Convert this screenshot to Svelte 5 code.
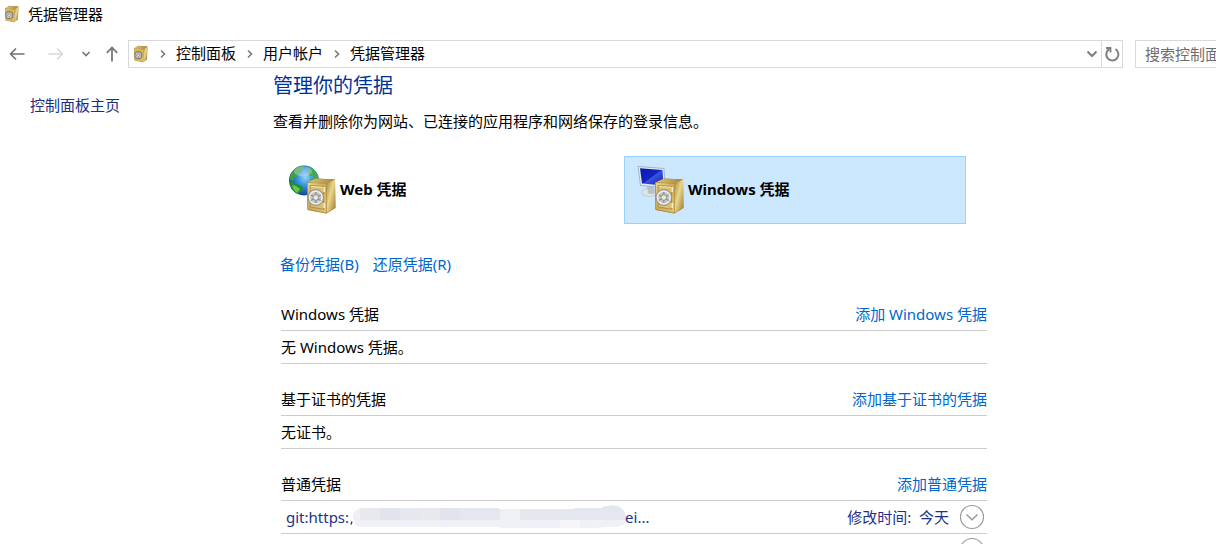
<script>
  const crumbs = ['控制面板', '用户帐户', '凭据管理器'];
  const sections = [
    { title: 'Windows 凭据', action: '添加 Windows 凭据', empty: '无 Windows 凭据。' },
    { title: '基于证书的凭据', action: '添加基于证书的凭据', empty: '无证书。' },
    { title: '普通凭据', action: '添加普通凭据', empty: '' }
  ];
  let selected = $state('windows');
</script>

{#snippet safeShape()}
  <path d="M19 18 L28 13.500 L47 14.500 L47.500 43 L38.500 48.500 L19.500 45Z" fill="#94742c" />
  <path d="M19.500 17.500 L28 13.500 L47 14.500 L38.500 18.500Z" fill="url(#goldTop)" />
  <path d="M38.500 18.500 L47 14.500 L47.300 42.500 L38.500 48Z" fill="url(#goldSide)" />
  <path d="M19.500 17.500 L38.500 18.500 L38.500 48 L20 44.500Z" fill="url(#goldFront)" stroke="#b08f42" stroke-width=".6" />
  <path d="M22 20.500 L35.500 21.300 L35.500 44.300 L22.300 42Z" fill="#d8bf74" stroke="#a3853c" stroke-width=".8" />
  <path d="M23 21.500 L35 22.300" stroke="#fff3b8" stroke-width=".8" />
  <path d="M36.200 22v5M36.200 38v5" stroke="#f3ecc8" stroke-width="1.800" />
  <circle cx="27.800" cy="32.500" r="7.900" fill="#c6c5c0" stroke="#94928c" stroke-width="1" />
  <circle cx="27.800" cy="32.500" r="6.300" fill="none" stroke="#efefed" stroke-width="1.300" />
  <path d="M27.800 27v11M22.800 30l10 5.500M32.800 30l-10 5.500" stroke="#84827c" stroke-width="1" />
  <circle cx="27.800" cy="32.500" r="2.800" fill="#e8e8e6" stroke="#85857f" stroke-width=".8" />
{/snippet}

{#snippet smallSafe()}
  <svg class="small-safe" viewBox="0 0 16 18" aria-hidden="true">
    <path d="M1 3.500 L5 .8 L14.500 1.500 L14 14.500 L10 17.300 L1.500 15.500Z" fill="#b08a38" />
    <path d="M1.300 3.500 L5 1 L14.300 1.600 L10.500 4.500Z" fill="url(#goldTop)" />
    <path d="M10.500 4.500 L14.300 1.800 L13.800 14.300 L10.200 17Z" fill="url(#goldSide)" />
    <path d="M1.300 3.800 L10.500 4.600 L10.200 17 L1.800 15.200Z" fill="#d9b75c" />
    <circle cx="5.300" cy="10.200" r="3.500" fill="#c9c6bb" stroke="#85827a" stroke-width="1.200" />
    <path d="M5.300 8v4.500M3.200 10.200h4.300" stroke="#8b887e" />
    <circle cx="5.300" cy="10.200" r="1" fill="#dedede" />
  </svg>
{/snippet}

{#snippet chevron()}
  <svg width="8" height="10" viewBox="0 0 8 10" aria-hidden="true">
    <path d="M2 1.500 5.500 5 2 8.500" fill="none" stroke="#7a7a7a" stroke-width="1.600" />
  </svg>
{/snippet}

{#snippet expander()}
  <button class="expand" aria-label="展开">
    <svg width="26" height="26" viewBox="0 0 26 26" aria-hidden="true">
      <circle cx="13" cy="13" r="11.500" fill="#fff" stroke="#999" stroke-width="1.200" />
      <path d="M7.500 10.500 13 15.800l5.500-5.300" fill="none" stroke="#999" stroke-width="1.500" />
    </svg>
  </button>
{/snippet}

<svg class="defs" aria-hidden="true">
  <defs>
    <linearGradient id="goldFront" x1="0" y1="0" x2="1" y2="1">
      <stop offset="0" stop-color="#f0dc98" /><stop offset=".5" stop-color="#cdaa54" /><stop offset="1" stop-color="#e3c671" />
    </linearGradient>
    <linearGradient id="goldSide" x1="0" y1="0" x2="1" y2="1">
      <stop offset="0" stop-color="#a88638" /><stop offset=".45" stop-color="#e9d68e" /><stop offset="1" stop-color="#9b7a2c" />
    </linearGradient>
    <linearGradient id="goldTop" x1="0" y1="0" x2="1" y2="0">
      <stop offset="0" stop-color="#e0c678" /><stop offset="1" stop-color="#a48640" />
    </linearGradient>
    <radialGradient id="sea" cx=".55" cy=".4" r=".62">
      <stop offset="0" stop-color="#8fd4f6" /><stop offset=".45" stop-color="#3292de" /><stop offset="1" stop-color="#163f92" />
    </radialGradient>
    <linearGradient id="screen" x1="0" y1="0" x2="1" y2="1">
      <stop offset="0" stop-color="#0a18a8" /><stop offset=".5" stop-color="#1424c4" /><stop offset=".52" stop-color="#3c55e0" /><stop offset="1" stop-color="#0c1ba8" />
    </linearGradient>
    <clipPath id="globe"><circle cx="16" cy="15.500" r="14.500" /></clipPath>
  </defs>
</svg>

<div class="window">
  <header class="title">{@render smallSafe()}<span>凭据管理器</span></header>

  <nav class="bar" aria-label="导航">
    <button class="back" aria-label="后退">
      <svg width="16" height="14" viewBox="0 0 16 14"><path d="M15.500 7H1.500M7 1.500 1.500 7 7 12.500" fill="none" stroke="#707070" stroke-width="1.600" /></svg>
    </button>
    <button class="forward" aria-label="前进">
      <svg width="16" height="14" viewBox="0 0 16 14"><path d="M.5 7h14M9 1.500 14.500 7 9 12.500" fill="none" stroke="#d8d8d8" stroke-width="1.600" /></svg>
    </button>
    <button class="recent" aria-label="最近浏览的位置">
      <svg width="10" height="8" viewBox="0 0 10 8"><path d="M1.500 2 5 5.500 8.500 2" fill="none" stroke="#777" stroke-width="1.700" /></svg>
    </button>
    <button class="up" aria-label="上移">
      <svg width="14" height="16" viewBox="0 0 14 16"><path d="M7 15.500V1.500M1.800 6.800 7 1.500l5.200 5.300" fill="none" stroke="#787878" stroke-width="1.800" /></svg>
    </button>
    <div class="address">
      {@render smallSafe()}
      {#each crumbs as crumb}
        <span class="sep">{@render chevron()}</span><a class="crumb" href="#top">{crumb}</a>
      {/each}
      <button class="drop" aria-label="历史记录">
        <svg width="12" height="8" viewBox="0 0 12 8"><path d="M1.500 1.500 6 6l4.500-4.500" fill="none" stroke="#808080" stroke-width="2" /></svg>
      </button>
      <button class="refresh" aria-label="刷新">
        <svg width="16" height="16" viewBox="0 0 16 16"><path d="M11.500 3.200A6.100 6.100 0 1 1 5.500 3" fill="none" stroke="#808080" stroke-width="2" /><path d="M2 2h4.500v4.500" fill="none" stroke="#808080" stroke-width="1.800" /></svg>
      </button>
    </div>
    <input class="search" type="text" aria-label="搜索控制面板" placeholder="搜索控制面板" />
  </nav>

  <div class="body">
    <aside><a class="home" href="#home">控制面板主页</a></aside>
    <main>
      <h1>管理你的凭据</h1>
      <p class="intro">查看并删除你为网站、已连接的应用程序和网络保存的登录信息。</p>

      <div class="vaults">
        <button class="vault" class:selected={selected === 'web'} onclick={() => (selected = 'web')}>
          <svg width="48" height="50" viewBox="0 0 48 50" aria-hidden="true">
            <circle cx="16" cy="15.500" r="15" fill="url(#sea)" />
            <g clip-path="url(#globe)">
              <path d="M2 12 3 6l6-4 6-2 1 2-3 3 1 2-4 2-1 3-3 1-1 3-3-1z" fill="#3f9f4a" />
              <path d="M19 1c6 0 10 5 12 10l-2 5-3-2-1-4-3 1-2-3 2-2z" fill="#45a94a" />
              <path d="M0 15l4 2 4 2 6 2 1 4-4 3-1 4C4 28 0 22 0 15z" fill="#258f33" />
              <path d="M4 20l4 1 4 3-3 4c-3-2-4-5-5-8z" fill="#63c94a" />
              <path d="M22 13l5 2 1 3-5 1z" fill="#4bb052" />
            </g>
            <ellipse cx="15" cy="6.500" rx="9" ry="5" fill="#fff" opacity=".3" />
            {@render safeShape()}
          </svg>
          <span>Web 凭据</span>
        </button>
        <button class="vault" class:selected={selected === 'windows'} onclick={() => (selected = 'windows')}>
          <svg width="48" height="50" viewBox="0 0 48 50" aria-hidden="true">
            <ellipse cx="13.500" cy="27.500" rx="8" ry="4" fill="#dde4e8" stroke="#b5c1c9" stroke-width=".7" />
            <path d="M11 21l7 1 1 6c-2 1.500-5 1.500-7 0z" fill="#b6c1c9" />
            <path d="M2 1.500 28 3.500 29 22.500 4.500 20.500Z" fill="#e3edf3" stroke="#93a7b5" stroke-width=".8" />
            <path d="M4 3.200 26.500 5 27.500 20.500 6 18.500Z" fill="url(#screen)" />
            {@render safeShape()}
          </svg>
          <span>Windows 凭据</span>
        </button>
      </div>

      <div class="tools"><a href="#backup">备份凭据(B)</a><a href="#restore">还原凭据(R)</a></div>

      {#each sections as section}
        <section>
          <div class="head"><h2>{section.title}</h2><a href="#add">{section.action}</a></div>
          {#if section.empty}
            <p class="row">{section.empty}</p>
          {:else}
            <div class="row entry">
              <span class="name">git:https:</span>
              <svg class="mask" width="276" height="24" viewBox="0 0 276 24" aria-hidden="true">
                <defs><clipPath id="smudge"><path d="M10 3H147v1h75V3h27c5-3 17-4 21 1 4 4 5 10 3 14-3 4-9 4-17 4l-12 1H150l-6-1H10C4 22 1 18 1 13S4 4 10 3z" /></clipPath></defs>
                <path d="M0 16.500l-1 3" stroke="#1e3287" stroke-width="1.300" />
                <g clip-path="url(#smudge)">
                  <path fill="#e6e8f0" d="M0 0h276v15H0z" /><path fill="#f0f1f6" d="M0 15h276v9H0z" />
                  <path fill="#e1e3ed" d="M28 0h20v15H28zM88 0h20v15H88z" /><path fill="#e4e7f0" d="M108 0h40v15h-40zM222 0h54v15h-54z" />
                  <path fill="#e9e9ed" d="M8 0h20v15H8zM68 0h20v15H68z" />
                  <path fill="#efeff4" d="M0 0h8v15H0zM148 0h20v15h-20z" /><path fill="#f6f6f9" d="M208 15h20v9h-20z" />
                </g>
              </svg>
              <span class="tail">ei...</span>
              <span class="date">修改时间:&nbsp; 今天</span>
              {@render expander()}
            </div>
            <div class="row entry">{@render expander()}</div>
          {/if}
        </section>
      {/each}
    </main>
  </div>
</div>

<style>
  :global(body) { background: #fff; }
  .window {
    height: 100vh; overflow: hidden; display: flex; flex-direction: column;
    font: 15px/22px "Noto Sans", "Noto Sans CJK SC", sans-serif; color: #000;
  }
  .window * { box-sizing: border-box; }
  .defs { position: absolute; width: 0; height: 0; }
  svg { display: block; flex: none; }
  button { font: inherit; color: inherit; background: none; border: 0; padding: 0; cursor: pointer; }
  a { color: #0066cc; text-decoration: none; }
  h1, h2, p { margin: 0; font-weight: 400; }
  .small-safe { width: 16px; height: 18px; }
  .title { display: flex; align-items: center; gap: 8px; height: 28px; padding-left: 4px; flex: none; }
  .bar { display: flex; align-items: center; flex: none; padding: 12px 0 0 9px; }
  .forward { margin-left: 23px; }
  .recent { margin-left: 17px; }
  .up { margin-left: 14px; }
  .address {
    flex: 1; min-width: 0; display: flex; align-items: center; height: 28px;
    margin-left: 9px; padding-left: 4px; border: 1px solid #d9d9d9;
  }
  .sep { display: flex; justify-content: center; width: 27px; }
  .crumb { color: #000; white-space: nowrap; padding-bottom: 2px; }
  .drop { margin-left: auto; padding: 0 3px; }
  .refresh { display: flex; align-items: center; justify-content: center; align-self: stretch; width: 21px; border-left: 1px solid #d9d9d9; }
  .search {
    flex: none; width: 81px; height: 28px; margin-left: 12px; padding: 0 0 0 9px;
    border: 1px solid #d9d9d9; border-right: 0; border-radius: 0; background: #fff;
    font: inherit; appearance: none; outline: 0;
  }
  .search::placeholder { color: #6d6d6d; opacity: 1; }
  .body { display: grid; grid-template-columns: 273px minmax(0, 714px); }
  aside { padding: 26px 0 0 30px; }
  .home { color: #1a2f80; }
  main { padding-top: 4px; }
  h1 { font-size: 20px; line-height: 28px; color: #003399; }
  .intro { margin-top: 10px; }
  .vaults { display: grid; grid-template-columns: 1fr 1fr; gap: 6px; margin: 24px 21px 0 3px; }
  .vault {
    display: flex; align-items: center; gap: 4px; height: 68px; padding: 0 11px;
    border: 1px solid transparent; font-weight: 700; white-space: nowrap;
  }
  .vault span { padding-bottom: 2px; }
  .vault.selected { background: #cce8ff; border-color: #99d1ff; }
  .tools { display: flex; gap: 14px; margin: 29px 0 28px 7px; }
  section { margin: 0 0 24px 8px; }
  .head { display: flex; justify-content: space-between; padding-bottom: 5px; border-bottom: 1px solid #ccc; }
  h2 { font-size: 15px; line-height: 22px; }
  .row { min-height: 33px; padding: 5px 0; border-bottom: 1px solid #ccc; }
  .entry { display: flex; align-items: center; height: 33px; padding: 0 2px 0 5px; color: #1e3287; }
  .mask { margin: 0 -3px 0 3px; overflow: visible; }
  .date { margin-left: auto; padding-right: 10px; white-space: nowrap; }
  .expand { margin-left: auto; }
  .date + .expand { margin-left: 0; }
</style>
